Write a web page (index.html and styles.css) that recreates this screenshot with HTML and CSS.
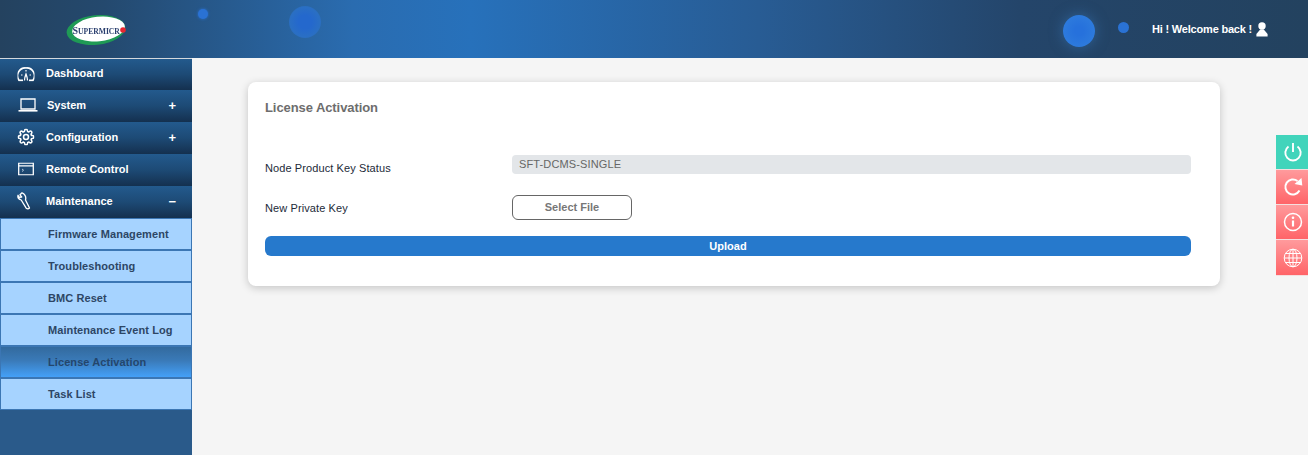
FILE: index.html
```html
<!DOCTYPE html>
<html lang="en">
<head>
<meta charset="utf-8">
<title>License Activation</title>
<link rel="stylesheet" href="styles.css">
</head>
<body>
<header class="topbar">
  <span class="bubble b1"></span>
  <span class="bubble b2"></span>
  <span class="bubble b3"></span>
  <span class="bubble b4"></span>
  <div class="logo">
    <svg width="62" height="34" viewBox="0 0 62 34">
      <ellipse cx="30" cy="17" rx="29.500" ry="14.800" fill="#1f9a55" transform="rotate(-6 30 17)"/>
      <ellipse cx="32.500" cy="16" rx="26.500" ry="12.200" fill="#fff" transform="rotate(-6 32.500 16)"/>
      <text x="6.500" y="20.500" class="logo-text">S<tspan class="logo-small">UPERMICR</tspan></text>
      <circle cx="57" cy="17" r="2.800" fill="#e8262f"/>
    </svg>
  </div>
  <div class="welcome">
    <span>Hi ! Welcome back !</span>
    <svg width="12" height="15" viewBox="0 0 12 15"><circle cx="6" cy="4" r="3.700" fill="#fff"/><path d="M4.200 7.600h3.600L11.600 12v2.600H.4V12z" fill="#fff"/></svg>
  </div>
</header>
<div class="shell">
  <nav class="sidebar">
    <a class="menu first">
      <svg class="ico" width="17" height="15" viewBox="0 0 17 15" fill="none" stroke="#fff" stroke-width="1.700"><path d="M5.500 13.800H1.500A7.800 7.800 0 0 1 8.500 1.500a7.800 7.800 0 0 1 7 12.300h-4"/><path d="M7 14c0-2 .5-4 1.500-6.500C9.500 10 10 12 10 14" stroke-width="1.300"/><path d="M3.500 8.500h1.500M12 8.500h1.500M8.500 3.500v1.500" stroke-width="1.200"/></svg>
      <span class="label">Dashboard</span>
    </a>
    <a class="menu">
      <svg class="ico ico-sys" width="20" height="14" viewBox="0 0 20 14" fill="none" stroke="#fff" stroke-width="1.300"><path d="M3 1h14v10H3z"/><path d="M.5 12.800h19" stroke-width="1.600"/></svg>
      <span class="label shifted">System</span><span class="sign">+</span>
    </a>
    <a class="menu">
      <svg class="ico" width="17" height="17" viewBox="0 0 24 24" fill="none" stroke="#fff" stroke-width="2.200"><circle cx="12" cy="12" r="3.500"/><path d="M19.400 15a1.650 1.650 0 0 0 .33 1.820l.06.06a2 2 0 0 1 0 2.830 2 2 0 0 1-2.830 0l-.06-.06a1.650 1.650 0 0 0-1.820-.33 1.650 1.650 0 0 0-1 1.510V21a2 2 0 0 1-2 2 2 2 0 0 1-2-2v-.09A1.650 1.650 0 0 0 9 19.400a1.650 1.650 0 0 0-1.820.33l-.06.06a2 2 0 0 1-2.830 0 2 2 0 0 1 0-2.830l.06-.06a1.650 1.650 0 0 0 .33-1.820 1.650 1.650 0 0 0-1.510-1H3a2 2 0 0 1-2-2 2 2 0 0 1 2-2h.09A1.650 1.650 0 0 0 4.600 9a1.650 1.650 0 0 0-.33-1.820l-.06-.06a2 2 0 0 1 0-2.830 2 2 0 0 1 2.830 0l.06.06a1.650 1.650 0 0 0 1.820.33H9a1.650 1.650 0 0 0 1-1.510V3a2 2 0 0 1 2-2 2 2 0 0 1 2 2v.09a1.650 1.650 0 0 0 1 1.510 1.650 1.650 0 0 0 1.820-.33l.06-.06a2 2 0 0 1 2.830 0 2 2 0 0 1 0 2.830l-.06.06a1.650 1.650 0 0 0-.33 1.820V9a1.650 1.650 0 0 0 1.510 1H21a2 2 0 0 1 2 2 2 2 0 0 1-2 2h-.09a1.650 1.650 0 0 0-1.510 1z"/></svg>
      <span class="label">Configuration</span><span class="sign">+</span>
    </a>
    <a class="menu">
      <svg class="ico" width="16" height="13" viewBox="0 0 16 13" fill="none" stroke="#fff" stroke-width="1.300"><path d="M.7.700h14.600v11.600H.7z"/><path d="M.7 3.300h14.600"/><path d="M4 6.500l1.600 1.200L4 9" stroke-width=".9" stroke="#c4d4e4"/></svg>
      <span class="label">Remote Control</span>
    </a>
    <a class="menu">
      <svg class="ico ico-tool" width="14" height="18" viewBox="0 0 14 18" fill="none" stroke="#fff" stroke-width="1.300" stroke-linejoin="round"><path d="M5 .800 3 2.800 4.700 5 2.300 5.400 1 3.300Q.2 6.800 4.200 8l5 8.200q1.800 1.400 3.300-.2L8.500 8Q9.800 3 5 .800z"/></svg>
      <span class="label">Maintenance</span><span class="sign">&#8722;</span>
    </a>
    <a class="sub"><span>Firmware Management</span></a>
    <a class="sub"><span>Troubleshooting</span></a>
    <a class="sub"><span>BMC Reset</span></a>
    <a class="sub"><span>Maintenance Event Log</span></a>
    <a class="sub active"><span>License Activation</span></a>
    <a class="sub"><span>Task List</span></a>
  </nav>
  <main class="content">
    <section class="card">
      <h1>License Activation</h1>
      <div class="row status-row">
        <label>Node Product Key Status</label>
        <div class="readonly">SFT-DCMS-SINGLE</div>
      </div>
      <div class="row file-row">
        <label>New Private Key</label>
        <button class="select" type="button">Select File</button>
      </div>
      <button class="upload" type="button">Upload</button>
    </section>
  </main>
</div>
<aside class="dock">
  <div class="dock-btn green">
    <svg width="20" height="20" viewBox="0 0 20 20" fill="none" stroke="#fff" stroke-width="1.900"><path d="M5.500 4.500a7.700 7.700 0 1 0 9 0"/><path d="M10 1v9"/></svg>
  </div>
  <div class="dock-btn red">
    <svg width="20" height="20" viewBox="0 0 20 20" fill="none" stroke="#fff" stroke-width="2"><path d="M16.500 13.500A7.500 7.500 0 1 1 14.500 4"/><path d="M11.500 7l7.800 1.500-.8-7.500z" fill="#fff" stroke="none"/></svg>
  </div>
  <div class="dock-btn red">
    <svg width="20" height="20" viewBox="0 0 20 20" fill="none" stroke="#fff" stroke-width="1.500"><circle cx="10" cy="10" r="8.500"/><path d="M10 8.500v6" stroke-width="2.200"/><circle cx="10" cy="5.800" r="1.300" fill="#fff" stroke="none"/></svg>
  </div>
  <div class="dock-btn red last">
    <svg width="20" height="20" viewBox="0 0 20 20" fill="none" stroke="#fff" stroke-width="1"><circle cx="10" cy="10" r="8.800"/><ellipse cx="10" cy="10" rx="4" ry="8.800"/><path d="M10 1.200v17.600M1.200 10h17.600M2.500 5.500h15M2.500 14.500h15"/></svg>
  </div>
</aside>
</body>
</html>
```
FILE: styles.css
```css
* { box-sizing: border-box; }
html, body { margin: 0; height: 100%; overflow: hidden; }
body {
  font-family: "Liberation Sans", Arial, sans-serif;
  background: #f5f5f5;
  display: flex;
  flex-direction: column;
  position: relative;
}
.topbar {
  height: 58px;
  flex: none;
  display: flex;
  align-items: center;
  justify-content: space-between;
  position: relative;
  overflow: hidden;
  background: linear-gradient(90deg, #24425f 0%, #24496e 8%, #2a6cb0 27%, #2771bb 36%, #285c94 58%, #24456a 78%, #23425f 100%);
}
.bubble { position: absolute; border-radius: 50%; background: #2a72d4; }
.b1 { left: 198px; top: 9px; width: 10px; height: 10px; box-shadow: 0 0 3px #2a72d4; }
.b2 { left: 289px; top: 6px; width: 32px; height: 32px; background: radial-gradient(circle, #2468cd 30%, #2a6fc4 65%, rgba(42, 111, 196, 0) 100%); }
.b3 { left: 1063px; top: 15px; width: 32px; height: 32px; box-shadow: 0 0 14px rgba(62, 130, 200, .5); background: radial-gradient(circle, #2671dc 20%, #3180dd 100%); }
.b4 { left: 1118px; top: 22px; width: 11px; height: 11px; }
.logo { margin-left: 66px; margin-top: 1px; display: flex; filter: blur(.3px); }
.logo-text { font-family: "Liberation Serif", serif; font-size: 10px; fill: #2a3f6e; font-weight: 700; }
.logo-small { font-size: 7.600px; }
.welcome {
  display: flex;
  align-items: center;
  gap: 4px;
  color: #fff;
  font-size: 11px;
  font-weight: 700;
  letter-spacing: -.2px;
  margin-right: 40px;
}
.shell { flex: 1; display: flex; min-height: 0; }
.sidebar {
  width: 192px;
  flex: none;
  background: #2a5a8a;
  display: flex;
  flex-direction: column;
}
.menu {
  height: 32px;
  flex: none;
  display: flex;
  align-items: center;
  position: relative;
  padding-left: 46px;
  padding-right: 16px;
  background: linear-gradient(180deg, #235a8d 0%, #1d4a75 50%, #14304f 100%);
  color: #fff;
  font-size: 11px;
  font-weight: 700;
}
.menu.first { border-top: 1px solid #d4d8dc; }
.ico { position: absolute; left: 26px; top: 50%; transform: translate(-50%, -50%); margin-top: -1px; }
.ico-sys { left: 28px; }
.ico-tool { left: 24px; }
.label { flex: 1; padding-bottom: 3px; }
.label.shifted { padding-left: 1px; }
.first .label { padding-bottom: 4px; }
.sign { font-size: 13px; font-weight: 700; padding-bottom: 1px; }
.sub {
  height: 32px;
  flex: none;
  display: flex;
  align-items: center;
  padding-left: 47px;
  padding-bottom: 1px;
  background: #a6d3ff;
  border: 1px solid #3b76b4;
  color: #2d4665;
  font-size: 11px;
  font-weight: 700;
  letter-spacing: .08px;
}
.sub.active {
  background: linear-gradient(180deg, #336a9e 0%, #3a7ab8 45%, #44a0f8 100%);
  color: #24466c;
}
.content { flex: 1; padding: 24px 88px 0 56px; min-width: 0; }
.card {
  height: 204px;
  background: #fff;
  border-radius: 8px;
  box-shadow: 0 2px 8px rgba(0, 0, 0, .2);
  padding: 18px 29px 0 17px;
}
h1 {
  margin: 0 0 40px;
  font-size: 13px;
  line-height: 15px;
  font-weight: 700;
  color: #6d6d6d;
  letter-spacing: -.08px;
}
.row { display: flex; }
.row label {
  width: 247px;
  flex: none;
  font-size: 11px;
  color: #222a38;
  letter-spacing: .1px;
}
.status-row { height: 40px; }
.status-row label { padding-top: 7px; }
.readonly {
  flex: 1;
  height: 19px;
  background: #e3e6e9;
  border-radius: 4px;
  padding-left: 7px;
  color: #666;
  font-size: 11px;
  letter-spacing: .13px;
  line-height: 18px;
}
.file-row { height: 41px; }
.file-row label { padding-top: 7px; }
.select {
  width: 120px;
  height: 25px;
  padding: 0 0 2px;
  background: #fff;
  border: 1px solid #666;
  border-radius: 6px;
  color: #777;
  font: 700 11px "Liberation Sans", Arial, sans-serif;
}
.upload {
  display: block;
  width: 100%;
  height: 20px;
  padding: 0;
  border: 0;
  border-radius: 6px;
  background: #2679cc;
  color: #fff;
  font: 700 11px "Liberation Sans", Arial, sans-serif;
}
.dock {
  position: absolute;
  right: 0;
  top: 135px;
  width: 32px;
  display: flex;
  flex-direction: column;
}
.dock-btn {
  height: 35px;
  display: flex;
  align-items: center;
  justify-content: center;
  padding-left: 2px;
  border-bottom: 1px solid #f5dede;
}
.dock-btn.green { background: #41d4bb; }
.dock-btn.red { background: linear-gradient(180deg, #ff9a9c 0%, #ff6468 100%); }
.dock-btn.last { height: 36px; }
```
